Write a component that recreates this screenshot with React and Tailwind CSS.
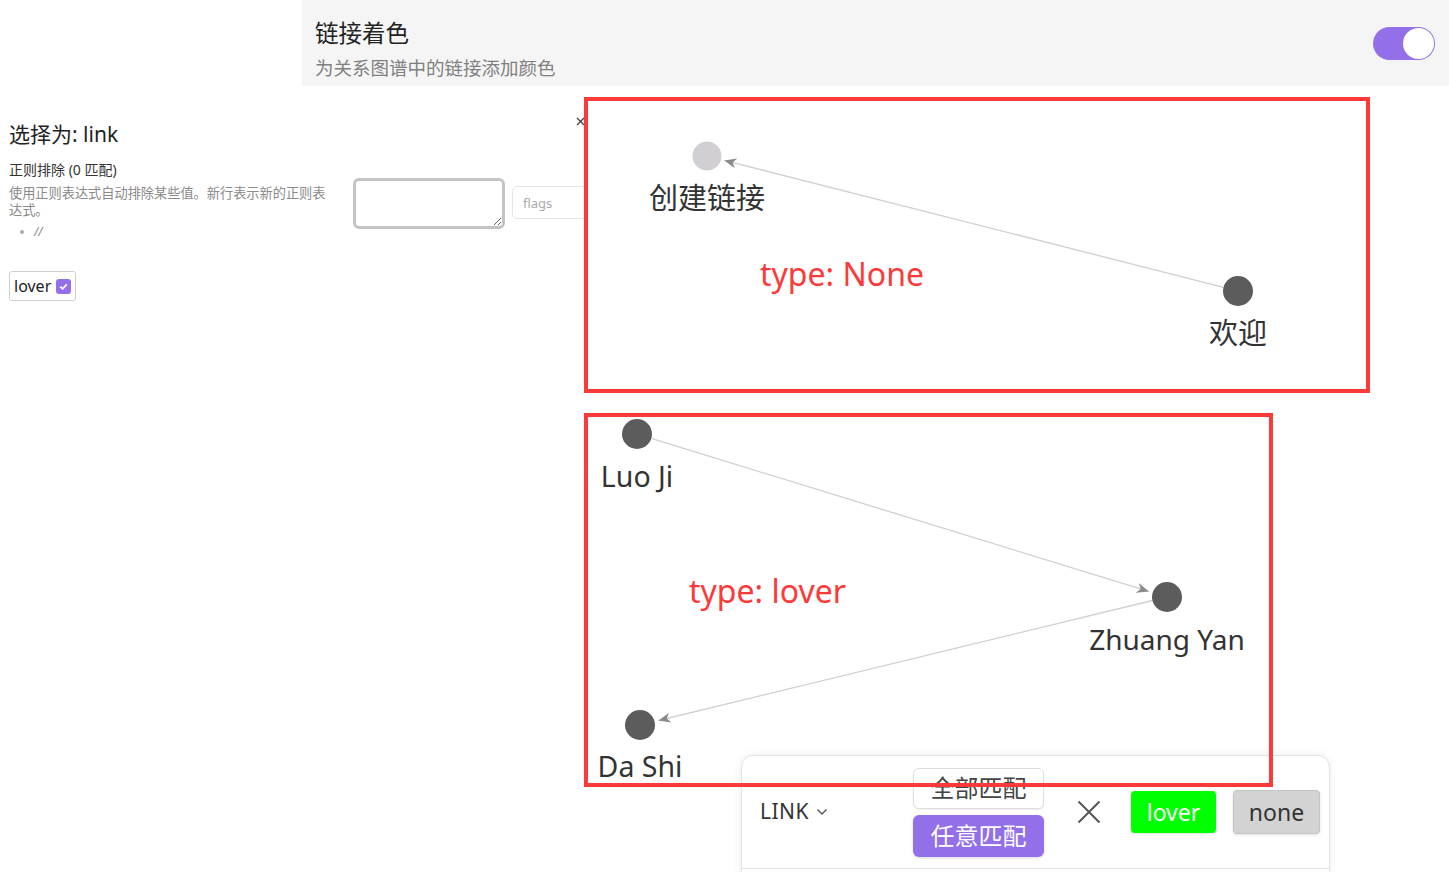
import React from "react";

const font = "font-['Noto_Sans','Noto_Sans_CJK_SC',sans-serif]";

function Arrow({ id }) {
  return (
    <defs>
      <marker id={id} viewBox="0 0 12 10" refX="12" refY="5" markerWidth="12" markerHeight="10" markerUnits="userSpaceOnUse" orient="auto">
        <path d="M0,0 L12,5 L0,10 L3.5,5 z" fill="#8a8a8a" />
      </marker>
    </defs>
  );
}

const labelStyle = { fontFamily: "'Noto Sans','Noto Sans CJK SC',sans-serif" };

function GraphOne() {
  return (
    <svg width="778" height="288" className="block overflow-visible">
      <Arrow id="arrA" />
      <line x1="635.5" y1="186.3" x2="136.4" y2="59.4" stroke="#cfcfd6" strokeWidth="1.3" markerEnd="url(#arrA)" />
      <circle cx="119" cy="55" r="14.5" fill="#d1cfd4" />
      <circle cx="650" cy="190" r="15" fill="#5c5c5c" />
      <text x="119" y="96" textAnchor="middle" dominantBaseline="central" fontSize="29" fill="#333" style={labelStyle}>创建链接</text>
      <text x="650" y="231" textAnchor="middle" dominantBaseline="central" fontSize="29" fill="#333" style={labelStyle}>欢迎</text>
      <text x="172" y="172" dominantBaseline="central" fontSize="32" fill="#fc3a3a" style={labelStyle}>type: None</text>
    </svg>
  );
}

function GraphTwo() {
  return (
    <svg width="681" height="366" className="block overflow-visible">
      <Arrow id="arrB" />
      <line x1="63.3" y1="21.4" x2="560.8" y2="174.4" stroke="#cfcfd6" strokeWidth="1.3" markerEnd="url(#arrB)" />
      <line x1="564.4" y1="183.5" x2="70.5" y2="303.5" stroke="#cfcfd6" strokeWidth="1.3" markerEnd="url(#arrB)" />
      <circle cx="49" cy="17" r="15" fill="#5c5c5c" />
      <circle cx="579" cy="180" r="15" fill="#5c5c5c" />
      <circle cx="52" cy="308" r="15" fill="#5c5c5c" />
      <text x="49" y="59" textAnchor="middle" dominantBaseline="central" fontSize="28.5" fill="#333" style={labelStyle}>Luo Ji</text>
      <text x="579" y="222" textAnchor="middle" dominantBaseline="central" fontSize="28" fill="#333" style={labelStyle}>Zhuang Yan</text>
      <text x="52" y="349" textAnchor="middle" dominantBaseline="central" fontSize="28.5" fill="#333" style={labelStyle}>Da Shi</text>
      <text x="101" y="173" dominantBaseline="central" fontSize="32" fill="#fc3a3a" style={labelStyle}>type: lover</text>
    </svg>
  );
}

export default function App() {
  return (
    <div className={`relative w-[1449px] h-[872px] overflow-hidden bg-white ${font}`}>
      {/* top settings bar */}
      <div className="flex">
        <div className="w-[302px] shrink-0" />
        <div className="flex-1 h-[86px] bg-[#f5f5f5] flex items-center justify-between pl-[13px] pr-[14px]">
          <div className="flex flex-col pt-[12px]">
            <div className="text-[23.5px] leading-[30px] text-[#222]">链接着色</div>
            <div className="mt-[8px] text-[18.5px] leading-[24px] text-[#808080]">为关系图谱中的链接添加颜色</div>
          </div>
          <div className="w-[62px] h-[33px] rounded-full bg-[#9370ea] flex items-center justify-end pr-[1px]">
            <div className="w-[31px] h-[31px] rounded-full bg-white" />
          </div>
        </div>
      </div>

      {/* main */}
      <div className="flex">
        <div className="w-[584px] shrink-0 overflow-hidden pl-[9px]">
          <div className="flex justify-between items-start pt-[34px]">
            <div className="text-[21px] leading-[28px] text-[#222]">选择为: link</div>
            <svg width="9" height="9" viewBox="0 0 9 9" className="mt-[-3px] mr-[-1px]">
              <path d="M1 1 L8 8 M8 1 L1 8" stroke="#444" strokeWidth="1.3" />
            </svg>
          </div>
          <div className="flex mt-[12px]">
            <div className="w-[331px] shrink-0">
              <div className="text-[14px] leading-[20px] text-[#333]">正则排除 (0 匹配)</div>
              <div className="mt-[5px] text-[13.2px] leading-[17px] text-[#8a8a8a] pr-[6px]">使用正则表达式自动排除某些值。新行表示新的正则表达式。</div>
              <ul className="mt-[4px] pl-[11px] text-[12px] leading-[18px] text-[#8a8a8a]">
                <li className="flex items-center gap-[10px]"><span className="w-[4px] h-[4px] rounded-full bg-[#aaa]" /><span className="italic">//</span></li>
              </ul>
            </div>
            <textarea className="ml-[13px] mt-[18px] w-[152px] h-[51px] border-[3px] border-[#c4c4c4] rounded-[6px] bg-white shrink-0" />
            <input placeholder="flags" className="ml-[7px] mt-[26px] w-[90px] h-[33px] border border-[#e5e5e5] rounded-[5px] pl-[10px] text-[13px] placeholder:text-[#aaa] shrink-0" />
          </div>
          <div className="mt-[30px] inline-flex items-center gap-[5px] h-[30px] border border-[#cfcfcf] rounded-[3px] px-[4px]">
            <span className="text-[16px] text-[#222] leading-[20px]">lover</span>
            <span className="w-[15px] h-[15px] rounded-[3px] bg-[#9370ea] flex items-center justify-center">
              <svg width="11" height="11" viewBox="0 0 12 12"><path d="M2.5 6.2 L5 8.6 L9.6 3.5" stroke="#fff" strokeWidth="1.8" fill="none" /></svg>
            </span>
          </div>
        </div>

        <div className="flex flex-col">
          <div className="mt-[11px] w-[786px] h-[296px] border-4 border-[#fc3a3a]">
            <GraphOne />
          </div>
          <div className="relative z-20 mt-[20px] w-[689px] h-[374px] border-4 border-[#fc3a3a]">
            <GraphTwo />
          </div>
        </div>
      </div>

      {/* bottom link-filter panel overlay */}
      <div className="absolute z-10 left-[741px] top-[755px] w-[589px] h-[140px] bg-white border border-[#e2e2e2] rounded-t-[12px] shadow-[0_0_10px_rgba(0,0,0,0.07)]">
        <div className="h-[113px] flex items-center border-b border-[#e2e2e2] pl-[18px]">
          <div className="w-[153px] shrink-0 flex items-center gap-[7px] text-[21px] text-[#333] tracking-[0.5px]">
            LINK
            <svg width="12" height="8" viewBox="0 0 12 8"><path d="M1.5 1.5 L6 6 L10.5 1.5" stroke="#555" strokeWidth="1.4" fill="none" /></svg>
          </div>
          <div className="flex flex-col gap-[6px] w-[131px] shrink-0">
            <div className="h-[41px] rounded-[6px] border border-[#dedede] bg-white flex items-center justify-center text-[24px] text-[#444] shadow-[0_1px_2px_rgba(0,0,0,0.08)]">全部匹配</div>
            <div className="h-[42px] rounded-[6px] bg-[#9370ea] flex items-center justify-center text-[24px] text-white shadow-[0_1px_3px_rgba(0,0,0,0.15)]">任意匹配</div>
          </div>
          <svg width="24" height="24" viewBox="0 0 24 24" className="ml-[33px] shrink-0">
            <path d="M1.5 1.5 L22.5 22.5 M22.5 1.5 L1.5 22.5" stroke="#555" strokeWidth="2" />
          </svg>
          <div className="ml-[30px] w-[85px] h-[42px] rounded-[4px] bg-[#00ff00] flex items-center justify-center text-[23px] text-white shadow-[0_1px_3px_rgba(0,0,0,0.12)]">lover</div>
          <div className="ml-[17px] w-[87px] h-[44px] rounded-[4px] bg-[#d3d3d3] border border-[#c4c4c4] flex items-center justify-center text-[23px] text-[#333] shadow-[0_1px_3px_rgba(0,0,0,0.12)]">none</div>
        </div>
      </div>
    </div>
  );
}
